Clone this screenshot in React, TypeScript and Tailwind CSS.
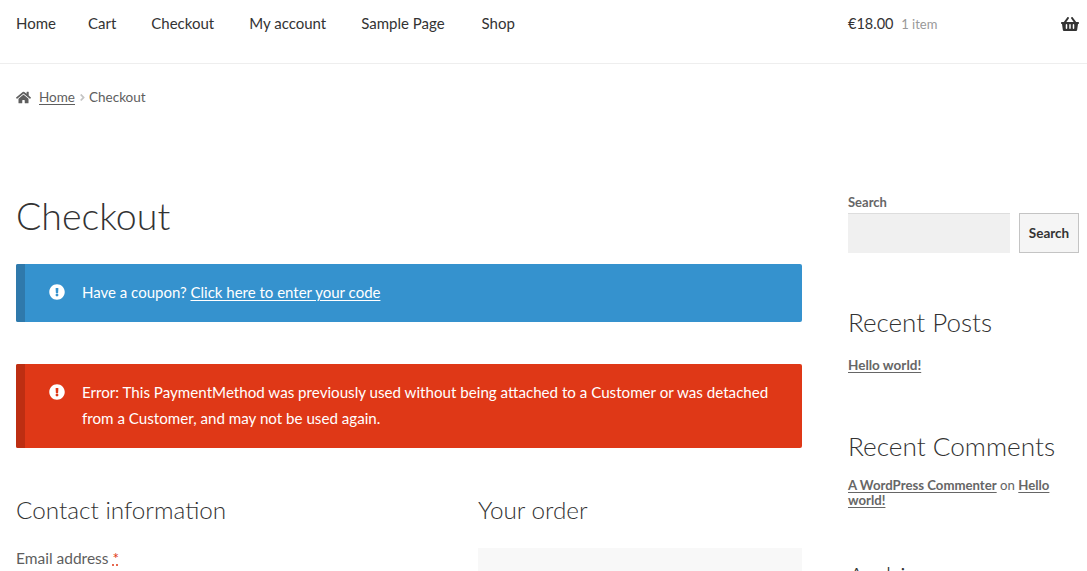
import { FaHome, FaExclamationCircle, FaShoppingBasket, FaAngleRight } from "react-icons/fa";

const navLinks = ["Home", "Cart", "Checkout", "My account", "Sample Page", "Shop"];

function Notice({ color, band, children }: { color: string; band: string; children: React.ReactNode }) {
  return (
    <div className={`flex rounded-[2px] overflow-hidden text-white text-[15px] leading-[26px] ${color}`}>
      <div className={`w-[9px] shrink-0 ${band}`} />
      <div className="pl-[24px] pt-[20px] shrink-0">
        <FaExclamationCircle className="text-[16px]" />
      </div>
      <div className="pl-[17px] pr-6 pt-[15px] pb-[17px]">{children}</div>
    </div>
  );
}

export default function App() {
  return (
    <div className="h-[571px] w-[1087px] overflow-hidden bg-white text-[#43454b] font-['Lato',sans-serif]">
      {/* Header */}
      <header className="flex h-[64px] border-b border-[#eeeeee] pl-4 pr-2">
        <nav className="flex w-[832px] gap-[35px] pt-[13px] text-[15px] leading-5 text-[#333333]">
          {navLinks.map((link) => (
            <span key={link} className={link === "Home" ? "-mr-[3px]" : link === "Sample Page" ? "mr-[2px]" : ""}>
              {link}
            </span>
          ))}
        </nav>
        <div className="flex flex-1 items-start justify-between pt-[14px] text-[#333333]">
          <div className="text-[14.5px] leading-5">
            €18.00 <span className="ml-[4px] text-[13px] text-[#999999]">1 item</span>
          </div>
          <FaShoppingBasket className="mt-[1px] text-[18px]" />
        </div>
      </header>

      {/* Breadcrumb */}
      <div className="flex items-center pl-4 pt-[23px] text-[13.5px] leading-5 text-[#5e5e5e]">
        <FaHome className="mr-[8px] text-[15px]" />
        <span className="underline underline-offset-2">Home</span>
        <FaAngleRight className="mx-[1.5px] text-[11px] text-[#c4c4c4]" />
        <span>Checkout</span>
      </div>

      <div className="flex pl-4 pt-[87px]">
        {/* Main column */}
        <main className="w-[786px] shrink-0">
          <h1 className="mt-[-3px] text-[37.5px] font-light leading-[50px] text-[#333333]">Checkout</h1>
          <div className="mt-[23px]">
            <Notice color="bg-[#3592ce]" band="bg-[#2f79ab]">
              Have a coupon? <span className="underline underline-offset-2">Click here to enter your code</span>
            </Notice>
          </div>
          <div className="mt-[42px]">
            <Notice color="bg-[#df3817]" band="bg-[#bd2e12]">
              <span className="text-[15.15px]">
                Error: This PaymentMethod was previously used without being attached to a Customer or was detached from
                a Customer, and may not be used again.
              </span>
            </Notice>
          </div>
          <div className="mt-[44px] flex">
            <div className="w-[462px] shrink-0">
              <h2 className="text-[24.3px] font-light leading-9 text-[#333333]">Contact information</h2>
              <div className="mt-[20px] text-[15.5px] leading-5 text-[#5e5e5e]">
                Email address <span className="text-[#df3817] underline decoration-dotted">*</span>
              </div>
            </div>
            <div className="flex-1">
              <h2 className="text-[24.3px] font-light leading-9 text-[#333333]">Your order</h2>
              <div className="mt-[20px] h-[60px] bg-[#f8f8f8]" />
            </div>
          </div>
        </main>

        {/* Sidebar */}
        <aside className="ml-[46px] w-[231px] shrink-0 text-[13.2px] text-[#666666]">
          <div className="text-[13px] font-bold leading-4">Search</div>
          <div className="mt-[3px] flex gap-[9px]">
            <div className="h-[40px] w-[162px] border-t border-[#dddddd] bg-[#f0f0f0]" />
            <div className="flex h-[40px] w-[60px] items-center justify-center border border-[#c4c4c4] bg-[#f5f5f5] text-[13.5px] font-bold text-[#333333]">
              Search
            </div>
          </div>
          <h2 className="mt-[51px] text-[26px] font-light leading-9 text-[#333333]">Recent Posts</h2>
          <div className="mt-[15px] text-[13.5px] font-bold leading-5 underline underline-offset-2">Hello world!</div>
          <h2 className="mt-[53px] text-[26.2px] font-light leading-9 text-[#333333]">Recent Comments</h2>
          <div className="mt-[14px] leading-[15px]">
            <span className="font-bold underline underline-offset-2">A WordPress Commenter</span> on{" "}
            <span className="font-bold underline underline-offset-2">Hello world!</span>
          </div>
          <h2 className="mt-[50px] text-[26px] font-light leading-9 text-[#333333]">Archives</h2>
        </aside>
      </div>
    </div>
  );
}
